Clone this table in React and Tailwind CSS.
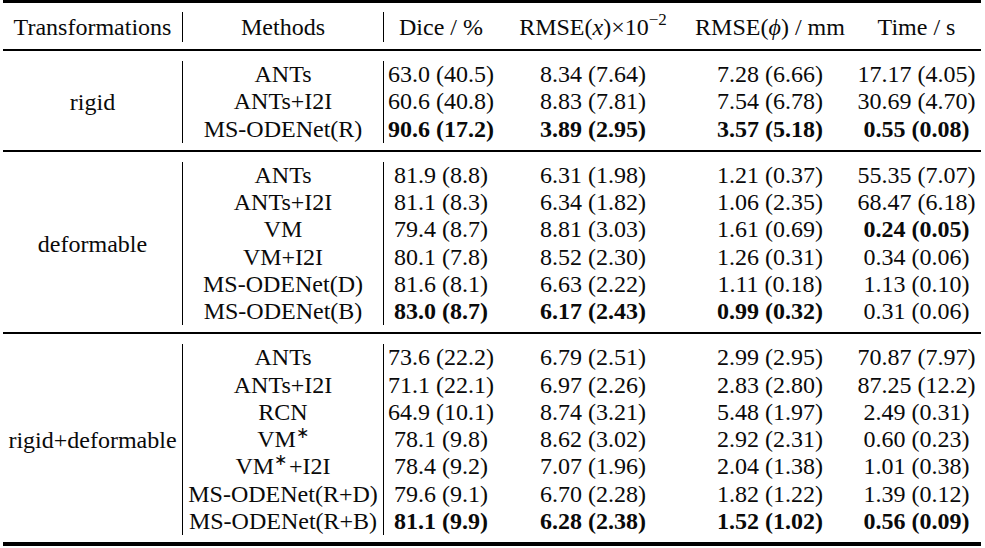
import React from "react";

const B = (s) => ({ v: s, b: true });

const groups = [
  {
    label: "rigid",
    rows: [
      ["ANTs", "63.0 (40.5)", "8.34 (7.64)", "7.28 (6.66)", "17.17 (4.05)"],
      ["ANTs+I2I", "60.6 (40.8)", "8.83 (7.81)", "7.54 (6.78)", "30.69 (4.70)"],
      ["MS-ODENet(R)", B("90.6 (17.2)"), B("3.89 (2.95)"), B("3.57 (5.18)"), B("0.55 (0.08)")],
    ],
  },
  {
    label: "deformable",
    rows: [
      ["ANTs", "81.9 (8.8)", "6.31 (1.98)", "1.21 (0.37)", "55.35 (7.07)"],
      ["ANTs+I2I", "81.1 (8.3)", "6.34 (1.82)", "1.06 (2.35)", "68.47 (6.18)"],
      ["VM", "79.4 (8.7)", "8.81 (3.03)", "1.61 (0.69)", B("0.24 (0.05)")],
      ["VM+I2I", "80.1 (7.8)", "8.52 (2.30)", "1.26 (0.31)", "0.34 (0.06)"],
      ["MS-ODENet(D)", "81.6 (8.1)", "6.63 (2.22)", "1.11 (0.18)", "1.13 (0.10)"],
      ["MS-ODENet(B)", B("83.0 (8.7)"), B("6.17 (2.43)"), B("0.99 (0.32)"), "0.31 (0.06)"],
    ],
  },
  {
    label: "rigid+deformable",
    rows: [
      ["ANTs", "73.6 (22.2)", "6.79 (2.51)", "2.99 (2.95)", "70.87 (7.97)"],
      ["ANTs+I2I", "71.1 (22.1)", "6.97 (2.26)", "2.83 (2.80)", "87.25 (12.2)"],
      ["RCN", "64.9 (10.1)", "8.74 (3.21)", "5.48 (1.97)", "2.49 (0.31)"],
      ["VM*", "78.1 (9.8)", "8.62 (3.02)", "2.92 (2.31)", "0.60 (0.23)"],
      ["VM*+I2I", "78.4 (9.2)", "7.07 (1.96)", "2.04 (1.38)", "1.01 (0.38)"],
      ["MS-ODENet(R+D)", "79.6 (9.1)", "6.70 (2.28)", "1.82 (1.22)", "1.39 (0.12)"],
      ["MS-ODENet(R+B)", B("81.1 (9.9)"), B("6.28 (2.38)"), B("1.52 (1.02)"), B("0.56 (0.09)")],
    ],
  },
];

function Method({ name }) {
  if (name === "VM*") {
    return (
      <span>
        VM<sup className="text-[16px] top-[-0.55em]">∗</sup>
      </span>
    );
  }
  if (name === "VM*+I2I") {
    return (
      <span>
        VM<sup className="text-[16px] top-[-0.55em]">∗</sup>
        <span className="ml-[2px]">+I2I</span>
      </span>
    );
  }
  return <span>{name}</span>;
}

function Cell({ c, className = "" }) {
  const bold = typeof c === "object";
  const v = bold ? c.v : c;
  return (
    <div
      className={`flex items-center justify-center whitespace-nowrap ${
        bold ? "font-bold" : ""
      } ${className}`}
    >
      {v}
    </div>
  );
}

function Group({ label, rows }) {
  return (
    <div className="flex pt-[10px] pb-[7px]">
      <div className="w-[179px] flex items-center justify-center whitespace-nowrap">
        {label}
      </div>
      <div className="flex flex-col">
        {rows.map((r, i) => (
          <div
            key={i}
            className="grid grid-cols-[201px_115px_190px_164px_129px] h-[27.25px] leading-[27.25px]"
          >
            <div className="border-l border-black flex items-center justify-center whitespace-nowrap">
              <Method name={r[0]} />
            </div>
            <Cell c={r[1]} className="border-l border-black" />
            <Cell c={r[2]} />
            <Cell c={r[3]} />
            <Cell c={r[4]} />
          </div>
        ))}
      </div>
    </div>
  );
}

export default function App() {
  return (
    <div className="w-[985px] h-[548px] bg-white text-[#0a0a0a] text-[24px] overflow-hidden font-['Liberation_Serif','Times_New_Roman',serif]">
      <div className="ml-[3px] w-[978px]">
        <div className="h-[3px] bg-black" />
        <div className="pt-[9px] pb-[7px]">
          <div className="grid grid-cols-[179px_201px_115px_190px_164px_129px] h-[30px] leading-[30px]">
            <div className="flex items-center justify-center whitespace-nowrap">Transformations</div>
            <div className="border-l border-black flex items-center justify-center">Methods</div>
            <div className="border-l border-black flex items-center justify-center whitespace-nowrap">
              Dice / %
            </div>
            <div className="flex items-center justify-center whitespace-nowrap">
              <span>
                RMSE(<span className="italic">x</span>)×10
                <sup className="text-[17px] top-[-0.6em]">−2</sup>
              </span>
            </div>
            <div className="flex items-center justify-center whitespace-nowrap">
              <span>
                RMSE(<span className="italic">ϕ</span>) / mm
              </span>
            </div>
            <div className="flex items-center justify-center whitespace-nowrap">Time / s</div>
          </div>
        </div>
        <div className="h-[2px] bg-black" />
        <Group {...groups[0]} />
        <div className="h-[2px] bg-black" />
        <Group {...groups[1]} />
        <div className="h-[2px] bg-black" />
        <Group {...groups[2]} />
        <div className="h-[4px] bg-black" />
      </div>
    </div>
  );
}
